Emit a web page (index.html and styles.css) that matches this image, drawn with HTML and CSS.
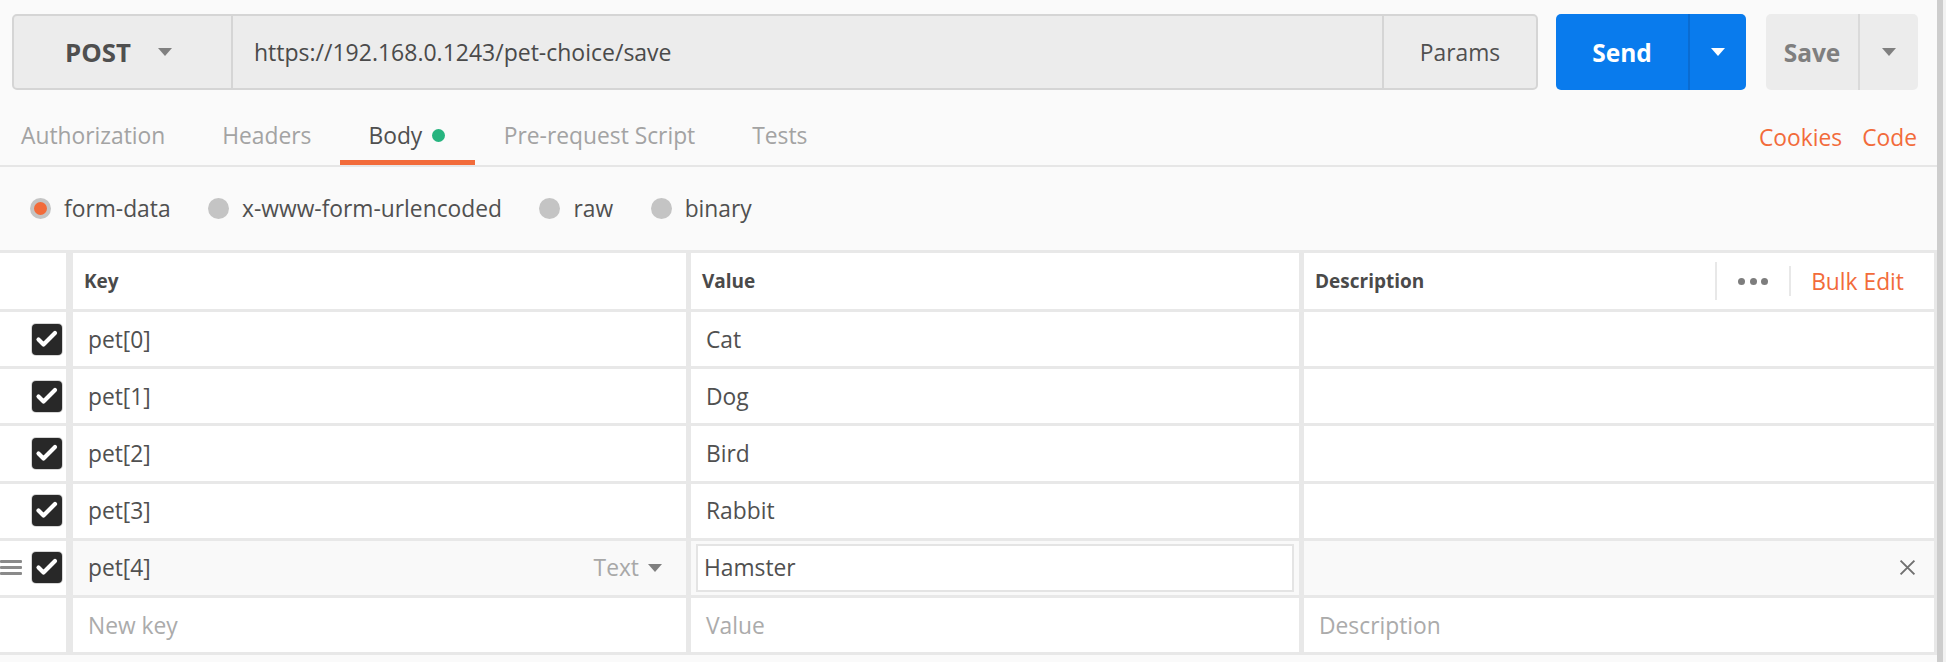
FILE: index.html
```html
<!DOCTYPE html>
<html lang="en">
  <head>
    <meta charset="UTF-8" />
    <meta name="viewport" content="width=device-width, initial-scale=1.0" />
    <title>Request</title>
    <link rel="stylesheet" href="styles.css">
  </head>
  <body>
    <div class="app">
      <!-- Method, url and the two split buttons -->
      <div class="request-bar">
        <div class="url-group">
          <div class="method">POST <span class="caret"></span></div>
          <div class="url">https://192.168.0.1243/pet-choice/save</div>
          <div class="params">Params</div>
        </div>
        <div class="split send">
          <span class="split-main">Send</span>
          <span class="split-caret"><span class="caret"></span></span>
        </div>
        <div class="split save">
          <span class="split-main">Save</span>
          <span class="split-caret"><span class="caret"></span></span>
        </div>
      </div>

      <div class="tabs">
        <div class="tab first">Authorization</div>
        <div class="tab">Headers</div>
        <div class="tab active">Body <span class="dot"></span></div>
        <div class="tab">Pre-request Script</div>
        <div class="tab">Tests</div>
        <div class="tab-links">
          <span>Cookies</span>
          <span>Code</span>
        </div>
      </div>

      <div class="body-types">
        <label class="radio selected"><span class="circle"></span>form-data</label>
        <label class="radio"><span class="circle"></span>x-www-form-urlencoded</label>
        <label class="radio"><span class="circle"></span>raw</label>
        <label class="radio"><span class="circle"></span>binary</label>
      </div>

      <div class="kv-table">
        <div class="cell side"></div>
        <div class="cell head">Key</div>
        <div class="cell head">Value</div>
        <div class="cell head">
          Description
          <div class="head-tools">
            <span class="sep tall"></span>
            <span class="dots"><i></i><i></i><i></i></span>
            <span class="sep"></span>
            <span class="bulk">Bulk Edit</span>
          </div>
        </div>

        <div class="cell side"><span class="check"><svg viewBox="0 0 30 30"><path d="M6.5 15.5l5 5 11.5-11.5" /></svg></span></div>
        <div class="cell">pet[0]</div>
        <div class="cell">Cat</div>
        <div class="cell"></div>

        <div class="cell side"><span class="check"><svg viewBox="0 0 30 30"><path d="M6.5 15.5l5 5 11.5-11.5" /></svg></span></div>
        <div class="cell">pet[1]</div>
        <div class="cell">Dog</div>
        <div class="cell"></div>

        <div class="cell side"><span class="check"><svg viewBox="0 0 30 30"><path d="M6.5 15.5l5 5 11.5-11.5" /></svg></span></div>
        <div class="cell">pet[2]</div>
        <div class="cell">Bird</div>
        <div class="cell"></div>

        <div class="cell side"><span class="check"><svg viewBox="0 0 30 30"><path d="M6.5 15.5l5 5 11.5-11.5" /></svg></span></div>
        <div class="cell">pet[3]</div>
        <div class="cell">Rabbit</div>
        <div class="cell"></div>

        <div class="cell side">
          <span class="handle"><i></i><i></i><i></i></span>
          <span class="check"><svg viewBox="0 0 30 30"><path d="M6.5 15.5l5 5 11.5-11.5" /></svg></span>
        </div>
        <div class="cell hover">pet[4] <span class="type">Text <span class="caret"></span></span></div>
        <div class="cell hover editing"><div class="edit-box">Hamster</div></div>
        <div class="cell hover">
          <svg class="remove" viewBox="0 0 16 16"><path d="M1.5 1.5l13 13M14.5 1.5l-13 13" /></svg>
        </div>

        <div class="cell side"></div>
        <div class="cell placeholder">New key</div>
        <div class="cell placeholder">Value</div>
        <div class="cell placeholder">Description</div>
      </div>
    </div>
  </body>
</html>
```

FILE: styles.css
```css
body {
  margin: 0;
  font-family: "Open Sans", "Liberation Sans", sans-serif;
  font-size: 22.8px;
  color: #505050;
  background-color: #f2f2f2;
}

.app {
  width: 1937px;
  height: 662px;
  background-color: #fafafa;
  border-right: 6px solid #cdcdcd;
}

/* request bar */
.request-bar {
  display: flex;
  height: 76px;
  padding: 14px 0 0 12px;
}

.url-group {
  display: flex;
  width: 1526px;
  box-sizing: border-box;
  border: 2px solid #d5d5d5;
  border-radius: 5px;
  background-color: #ececec;
}

.method {
  width: 219px;
  border-right: 2px solid #d5d5d5;
  display: flex;
  align-items: center;
  justify-content: center;
  gap: 27px;
  font-weight: 700;
  font-size: 25.8px;
  color: #4f4f4f;
  padding-right: 8px;
  box-sizing: border-box;
}

.caret {
  width: 0;
  height: 0;
  border-left: 7.5px solid transparent;
  border-right: 7.5px solid transparent;
  border-top: 8px solid #808080;
}

.url {
  flex: 1;
  display: flex;
  align-items: center;
  padding-left: 21px;
  font-size: 23px;
  color: #4a4a4a;
}

.params {
  width: 152px;
  border-left: 2px solid #d5d5d5;
  display: flex;
  align-items: center;
  justify-content: center;
  color: #505050;
}

.split {
  display: flex;
  height: 76px;
  border-radius: 5px;
  font-weight: 700;
  font-size: 24.5px;
  overflow: hidden;
}

.split-main,
.split-caret {
  display: flex;
  align-items: center;
  justify-content: center;
}

.send {
  margin-left: 18px;
  width: 190px;
  background-color: #097bed;
  color: #fff;
}

.send .split-main {
  width: 132px;
  border-right: 2px solid #0a6cd2;
}

.send .split-caret {
  flex: 1;
}

.send .caret {
  border-top-color: #fff;
}

.save {
  margin-left: 20px;
  width: 152px;
  background-color: #ececec;
  color: #7f7f7f;
}

.save .split-main {
  width: 92px;
  border-right: 2px solid #dadada;
}

.save .split-caret {
  flex: 1;
}

/* tabs */
.tabs {
  display: flex;
  height: 75px;
  border-bottom: 2px solid #e6e6e6;
}

.tab {
  display: flex;
  align-items: center;
  padding: 20px 28.5px 0;
  border-bottom: 5px solid transparent;
  color: #a3a3a3;
}

.tab.first {
  padding-left: 21px;
}

.tab.active {
  color: #4f4f4f;
  border-bottom-color: #f26b3a;
  padding-right: 30px;
}

.dot {
  width: 13px;
  height: 13px;
  margin-left: 10px;
  border-radius: 50%;
  background-color: #26b47f;
}

.tab-links {
  margin-left: auto;
  display: flex;
  align-items: center;
  gap: 20px;
  padding: 20px 20px 0 0;
  color: #f26b3a;
}

/* body type radios */
.body-types {
  display: flex;
  align-items: center;
  height: 83px;
  padding-left: 30px;
}

.radio {
  display: flex;
  align-items: center;
  gap: 13px;
  margin-right: 37.5px;
}

.circle {
  width: 21px;
  height: 21px;
  border-radius: 50%;
  background-color: #c4c4c4;
  box-sizing: border-box;
}

.radio.selected .circle {
  background-color: #f26b3a;
  border: 4.5px solid #c4c4c4;
}

/* key / value table */
.kv-table {
  display: grid;
  grid-template-columns: 68px 613px 608px 630px;
  grid-template-rows: 56px repeat(6, 54.2px);
  column-gap: 5px;
  row-gap: 3px;
  padding: 3px 3px 3px 0;
  background-color: #e8e8e8;
}

.cell {
  display: flex;
  align-items: center;
  padding-left: 15px;
  background-color: #fff;
  min-width: 0;
}

.cell.side {
  padding: 0 4px 0 0;
  border-right: 2px solid #e8e8e8;
  justify-content: flex-end;
}

.cell.head {
  padding-left: 11px;
  font-weight: 700;
  font-size: 19px;
  color: #4a4a4a;
}

.head-tools {
  margin-left: auto;
  display: flex;
  align-items: center;
  padding-right: 30px;
  font-weight: 400;
  font-size: 22.8px;
}

.sep {
  width: 2px;
  height: 30px;
  background-color: #e8e8e8;
}

.sep.tall {
  height: 38px;
}

.dots {
  display: flex;
  gap: 4.5px;
  margin: 0 21px 0 21px;
}

.dots i {
  width: 7px;
  height: 7px;
  border-radius: 50%;
  background-color: #7d7d7d;
}

.bulk {
  margin-left: 20px;
  color: #f26b3a;
}

.check {
  width: 30px;
  height: 31px;
  border-radius: 4px;
  background-color: #282828;
  box-shadow: 0 0 0 1px #d6d6d6;
  display: flex;
}

.check svg {
  width: 30px;
  height: 30px;
  fill: none;
  stroke: #fff;
  stroke-width: 4.2;
  stroke-linecap: round;
  stroke-linejoin: round;
}

.handle {
  margin-right: auto;
  display: flex;
  flex-direction: column;
  gap: 3px;
}

.handle i {
  display: block;
  width: 22px;
  height: 3px;
  border-radius: 1px;
  background-color: #8a8a8a;
}

.cell.hover {
  background-color: #f9f9f9;
}

.type {
  margin-left: auto;
  padding-right: 24px;
  display: flex;
  align-items: center;
  gap: 9px;
  color: #a8a8a8;
}

.cell.editing {
  padding: 3px 5px;
}

.edit-box {
  flex: 1;
  align-self: stretch;
  display: flex;
  align-items: center;
  padding-left: 6px;
  border: 2px solid #e4e4e4;
  background-color: #fff;
}

.remove {
  margin-left: auto;
  margin-right: 18px;
  width: 17px;
  height: 17px;
  fill: none;
  stroke: #707070;
  stroke-width: 1.8;
}

.placeholder {
  color: #ababab;
}
```
